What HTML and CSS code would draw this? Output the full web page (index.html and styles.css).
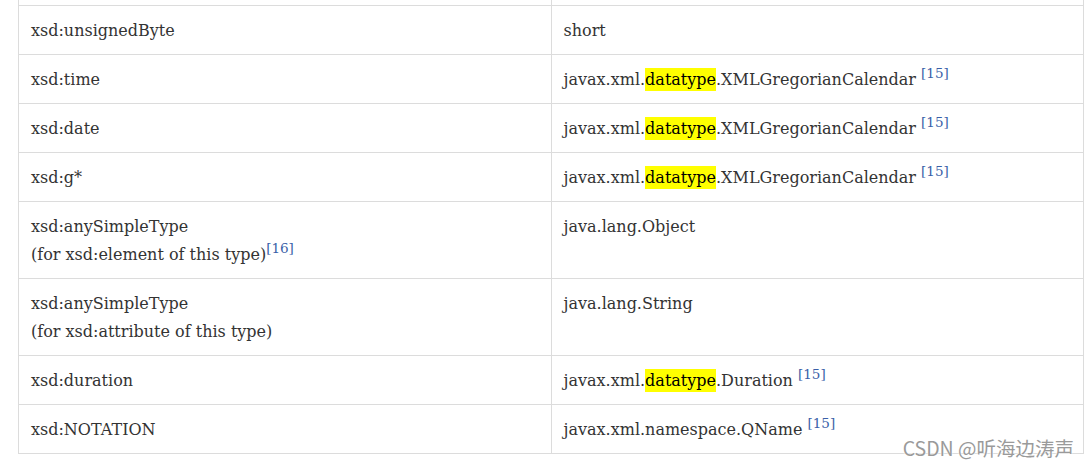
FILE: index.html
```html
<!DOCTYPE html>
<html>
<head>
<meta charset="utf-8">
<link rel="stylesheet" href="styles.css">
</head>
<body>
<div class="page">
<table class="types">
  <tr class="cut"><td></td><td></td></tr>
  <tr><td>xsd:unsignedByte</td><td>short</td></tr>
  <tr><td>xsd:time</td><td>javax.xml.<mark class="hl">datatype</mark>.XMLGregorianCalendar <sup class="ref">[15]</sup></td></tr>
  <tr><td>xsd:date</td><td>javax.xml.<mark class="hl">datatype</mark>.XMLGregorianCalendar <sup class="ref">[15]</sup></td></tr>
  <tr><td>xsd:g*</td><td>javax.xml.<mark class="hl">datatype</mark>.XMLGregorianCalendar <sup class="ref">[15]</sup></td></tr>
  <tr><td>xsd:anySimpleType<br>(for xsd:element of this type)<sup class="ref">[16]</sup></td><td>java.lang.Object</td></tr>
  <tr><td>xsd:anySimpleType<br>(for xsd:attribute of this type)</td><td>java.lang.String</td></tr>
  <tr><td>xsd:duration</td><td>javax.xml.<mark class="hl">datatype</mark>.Duration <sup class="ref">[15]</sup></td></tr>
  <tr><td>xsd:NOTATION</td><td>javax.xml.namespace.QName <sup class="ref">[15]</sup></td></tr>
</table>
<div class="watermark">CSDN @听海边涛声</div>
</div>
</body>
</html>
```
FILE: styles.css
```css
html, body {
  margin: 0;
  padding: 0;
  background: #fff;
}
.page {
  position: relative;
  width: 1089px;
  height: 469px;
  overflow: hidden;
  padding-left: 18px;
  box-sizing: border-box;
}
.types {
  border-collapse: collapse;
  width: 1066px;
  table-layout: fixed;
  font-family: "DejaVu Serif", "Liberation Serif", serif;
  font-size: 16px;
  color: #333;
}
.types td {
  border: 1px solid #dcdcdc;
  padding: 11px 12px 9px;
  line-height: 28px;
  vertical-align: top;
  width: 50%;
}
.types .cut td {
  border-top-style: hidden;
  height: 5px;
  padding: 0;
  line-height: 0;
}
.hl {
  background: #ffff00;
  color: #000;
  padding: 2px 0;
}
.ref {
  color: #3a5fa8;
  font-size: 13.5px;
  line-height: 0;
  vertical-align: 7px;
}
.watermark {
  position: absolute;
  right: 15px;
  bottom: 7px;
  font-family: "Noto Sans CJK SC", "Noto Sans", sans-serif;
  font-size: 19.5px;
  color: #9a9a9a;
  text-shadow: 0 0 2px #fff, 0 0 2px #fff;
}
```
